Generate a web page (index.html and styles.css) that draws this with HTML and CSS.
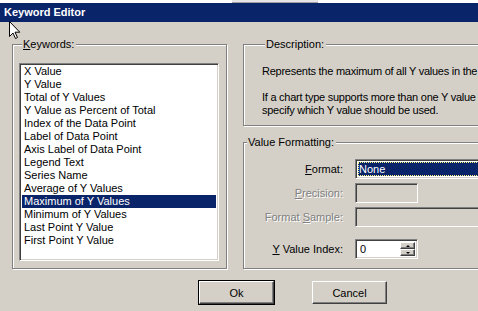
FILE: index.html
```html
<!DOCTYPE html>
<html lang="en">
<head>
    <meta charset="UTF-8">
    <title>Keyword Editor</title>
    <link rel="stylesheet" href="styles.css">
</head>
<body>
    <div class="strip"><span class="strip-box"></span></div>
    <div class="titlebar">Keyword Editor</div>

    <div class="dialog">
        <div class="panes">
            <fieldset class="group keywords">
                <legend><u>K</u>eywords:</legend>
                <ul class="listbox">
                    <li>X Value</li>
                    <li>Y Value</li>
                    <li>Total of Y Values</li>
                    <li>Y Value as Percent of Total</li>
                    <li>Index of the Data Point</li>
                    <li>Label of Data Point</li>
                    <li>Axis Label of Data Point</li>
                    <li>Legend Text</li>
                    <li>Series Name</li>
                    <li>Average of Y Values</li>
                    <li class="selected">Maximum of Y Values</li>
                    <li>Minimum of Y Values</li>
                    <li>Last Point Y Value</li>
                    <li>First Point Y Value</li>
                </ul>
            </fieldset>

            <div class="side">
                <fieldset class="group description">
                    <legend>Description:</legend>
                    <p>Represents the maximum of all Y values in the</p>
                    <p>If a chart type supports more than one Y value<br>specify which Y value should be used.</p>
                </fieldset>

                <fieldset class="group formatting">
                    <legend>Value Formatting:</legend>
                    <div class="form">
                        <label class="field-label"><u>F</u>ormat:</label>
                        <div class="combo"><span class="combo-value">None</span></div>

                        <label class="field-label disabled"><u>P</u>recision:</label>
                        <div class="textbox short disabled-box"></div>

                        <label class="field-label disabled">Format <u>S</u>ample:</label>
                        <div class="textbox disabled-box"></div>

                        <label class="field-label index-row"><u>Y</u> Value Index:</label>
                        <div class="textbox short spin index-row">
                            <span class="spin-value">0</span>
                            <span class="spin-buttons">
                                <span class="spin-btn"><span class="arrow up"></span></span>
                                <span class="spin-btn"><span class="arrow down"></span></span>
                            </span>
                        </div>
                    </div>
                </fieldset>
            </div>
        </div>

        <div class="buttons">
            <button class="btn default">Ok</button>
            <button class="btn">Cancel</button>
        </div>
    </div>

    <svg class="cursor" width="12" height="19" viewBox="0 0 12 19">
        <path d="M0.5 0.5 L0.5 15.5 L4 12 L6.5 17.5 L8.5 16.5 L6 11.2 L10.8 11.2 Z" fill="#fff" stroke="#000" stroke-width="1"/>
    </svg>
</body>
</html>
```

FILE: styles.css
```css
* {
    box-sizing: border-box;
}

body {
    margin: 0;
    width: 478px;
    height: 311px;
    overflow: hidden;
    background-color: #d4d0c8;
    color: #000;
    font-family: "Liberation Sans", Arial, sans-serif;
    font-size: 11px;
    line-height: 13px;
    position: relative;
}

.strip {
    height: 3px;
    background-color: #fff;
    display: flex;
}

.strip-box {
    margin-left: 232px;
    width: 86px;
    height: 3px;
    background-color: #e6e6e6;
    border-bottom: 1px solid #a0a0a0;
}

.titlebar {
    height: 19px;
    line-height: 19px;
    padding-left: 4px;
    background-color: #0a246a;
    color: #fff;
    font-weight: bold;
    font-size: 11px;
}

.dialog {
    padding: 16px 0 0 12px;
}

.panes {
    display: flex;
    gap: 16px;
    align-items: flex-start;
}

/* etched group box */
.group {
    margin: 0;
    min-width: 0;
    border: 1px solid #808080;
    box-shadow: 1px 1px 0 #fff, inset 1px 1px 0 #fff;
}

.group legend {
    margin-left: 3px;
    padding: 0 2px 0 1px;
    line-height: 13px;
    background-color: #d4d0c8;
}

.keywords {
    flex-shrink: 0;
    width: 215px;
    padding: 0 7px 7px 6px;
}

.listbox {
    list-style: none;
    margin: 12px 0 0;
    padding: 0;
    width: 200px;
    height: 198px;
    background-color: #fff;
    border: 1px solid;
    border-color: #808080 #fff #fff #808080;
    box-shadow: inset 1px 1px 0 #404040, inset -1px -1px 0 #d4d0c8;
    padding: 1px 2px;
}

.listbox li {
    height: 13px;
    padding-left: 2px;
    white-space: nowrap;
}

.listbox li.selected {
    background-color: #0a246a;
    color: #fff;
}

.side {
    flex-shrink: 0;
    width: 300px;
    display: flex;
    flex-direction: column;
}

.description {
    padding: 14px 0 8px 18px;
}

.description p {
    margin: 0 0 13px;
    white-space: nowrap;
    letter-spacing: -0.25px;
}

.description p:last-child {
    margin-bottom: 0;
}

.formatting {
    margin-top: 10px;
    padding: 0 0 9px 0;
}

.form {
    margin-top: 10px;
    display: grid;
    grid-template-columns: 99px 1fr;
    column-gap: 12px;
    row-gap: 4px;
    align-items: center;
}

.field-label {
    text-align: right;
    white-space: nowrap;
}

.field-label.disabled {
    color: #808080;
    text-shadow: 1px 1px 0 #fff;
}

.index-row {
    margin-top: 8px;
}

.combo,
.textbox {
    height: 20px;
    border: 1px solid;
    border-color: #808080 #fff #fff #808080;
    box-shadow: inset 1px 1px 0 #404040, inset -1px -1px 0 #d4d0c8;
    background-color: #fff;
}

.combo {
    padding: 2px;
}

.combo-value {
    display: block;
    height: 14px;
    line-height: 14px;
    padding-left: 1px;
    background-color: #0a246a;
    color: #fff;
    outline: 1px dotted #ffff80;
    outline-offset: -1px;
}

.textbox.short {
    width: 63px;
}

.disabled-box {
    background-color: #d4d0c8;
}

.spin {
    display: flex;
    padding: 2px;
    justify-content: space-between;
}

.spin-value {
    padding-left: 2px;
    line-height: 15px;
}

.spin-buttons {
    display: flex;
    flex-direction: column;
    width: 15px;
}

.spin-btn {
    flex: 1;
    display: flex;
    align-items: center;
    justify-content: center;
    background-color: #d4d0c8;
    border: 1px solid;
    border-color: #fff #404040 #404040 #fff;
    box-shadow: inset -1px -1px 0 #808080;
}

.arrow {
    width: 0;
    height: 0;
    border-left: 2px solid transparent;
    border-right: 2px solid transparent;
}

.arrow.up {
    border-bottom: 2px solid #000;
}

.arrow.down {
    border-top: 2px solid #000;
}

.buttons {
    display: flex;
    gap: 38px;
    padding-left: 187px;
    margin-top: 12px;
}

.btn {
    width: 75px;
    height: 23px;
    padding: 0;
    font-family: inherit;
    font-size: 11px;
    color: #000;
    background-color: #d4d0c8;
    border: 1px solid;
    border-color: #fff #404040 #404040 #fff;
    box-shadow: inset -1px -1px 0 #808080;
}

.btn.default {
    outline: 1px solid #000;
    outline-offset: 0;
    border-color: #fff #404040 #404040 #fff;
}

.cursor {
    position: absolute;
    left: 9px;
    top: 21px;
}
```
